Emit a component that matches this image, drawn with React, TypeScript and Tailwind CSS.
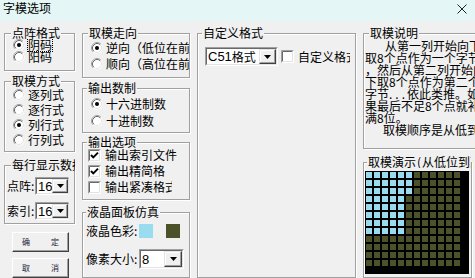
import React from "react";

type GroupProps = {
  title: React.ReactNode;
  className: string;
  legendClass: string;
  innerClass?: string;
  children?: React.ReactNode;
};

function Group({ title, className, legendClass, innerClass, children }: GroupProps) {
  return (
    <div
      className={`relative shrink-0 border border-[#a0a0a0] shadow-[inset_1px_1px_0_#fff,1px_1px_0_#fff] ${className}`}
    >
      <div
        className={`absolute top-[-7px] h-[12px] overflow-hidden whitespace-nowrap bg-[#f0f0f0] px-[1px] leading-[12px] ${legendClass}`}
      >
        {title}
      </div>
      <div className={`h-full overflow-hidden ${innerClass ?? ""}`}>{children}</div>
    </div>
  );
}

function Radio({ checked }: { checked?: boolean }) {
  return (
    <svg width="12" height="12" viewBox="0 0 12 12" className="shrink-0">
      <circle cx="6" cy="6" r="5.5" fill="#fff" />
      <path d="M2.11 9.89 A5.5 5.5 0 0 1 9.89 2.11" fill="none" stroke="#a0a0a0" strokeWidth="1" />
      <path d="M2.82 9.18 A4.5 4.5 0 0 1 9.18 2.82" fill="none" stroke="#696969" strokeWidth="1" />
      <path d="M9.18 2.82 A4.5 4.5 0 0 1 2.82 9.18" fill="none" stroke="#e3e3e3" strokeWidth="1" />
      {checked ? <circle cx="6" cy="6" r="2" fill="#000" /> : null}
    </svg>
  );
}

function Check({ checked }: { checked?: boolean }) {
  return (
    <svg width="13" height="13" viewBox="0 0 13 13" className="shrink-0">
      <rect x="0" y="0" width="13" height="13" fill="#fff" />
      <path d="M0.5 12.5 V0.5 H12.5" fill="none" stroke="#a0a0a0" />
      <path d="M1.5 11.5 V1.5 H11.5" fill="none" stroke="#696969" />
      <path d="M1.5 11.5 H11.5 V1.5" fill="none" stroke="#e3e3e3" />
      {checked ? (
        <path d="M3 6 L5.3 8.4 L10 3.6" fill="none" stroke="#000" strokeWidth="1.9" />
      ) : null}
    </svg>
  );
}

function Select({ value, className, btnClass }: { value: string; className: string; btnClass: string }) {
  return (
    <div
      className={`flex shrink-0 border border-t-[#a0a0a0] border-l-[#a0a0a0] border-b-white border-r-white ${className}`}
    >
      <div className="flex flex-1 border border-t-[#696969] border-l-[#696969] border-b-[#e3e3e3] border-r-[#e3e3e3] bg-white">
        <span className="flex flex-1 items-center pl-[1px] font-['Liberation_Sans','Noto_Sans_CJK_SC',sans-serif] text-[13px] leading-[13px]">
          {value}
        </span>
        <div
          className={`flex items-center justify-center border border-t-[#e3e3e3] border-l-[#e3e3e3] border-b-[#404040] border-r-[#404040] bg-[#f0f0f0] shadow-[inset_-1px_-1px_0_#a0a0a0,inset_1px_1px_0_#fff] ${btnClass}`}
        >
          <svg width="7" height="4" viewBox="0 0 7 4">
            <polygon points="0,0 7,0 3.5,4" fill="#000" />
          </svg>
        </div>
      </div>
    </div>
  );
}

function Button({ a, b }: { a: string; b: string }) {
  return (
    <div className="ml-[8px] flex h-[20px] w-[57px] shrink-0 items-center justify-center gap-[21px] border border-t-white border-l-white border-b-[#404040] border-r-[#404040] bg-[#f0f0f0] text-[8px] leading-[8px] text-[#1a1a3a] shadow-[inset_-1px_-1px_0_#a0a0a0]">
      <span>{a}</span>
      <span>{b}</span>
    </div>
  );
}

export default function App() {
  const rows = Array.from({ length: 12 }, (_, r) => r);
  const cols = Array.from({ length: 12 }, (_, c) => c);
  const isLit = (r: number, c: number) => (r < 3 ? c < 6 : r < 8 ? c < 5 : false);

  return (
    <div className="h-[278px] w-[475px] overflow-hidden bg-[#f0f0f0] font-['Noto_Sans_CJK_SC','Noto_Sans',sans-serif] text-[12px] leading-[12px] text-black">
      {/* title bar */}
      <div className="flex h-[21px] items-start justify-between bg-[#e5f6f6] pl-[3px] pr-[8px]">
        <span className="mt-[2px]">字模选项</span>
        <svg width="10" height="10" viewBox="0 0 10 10" className="mt-[4px]">
          <path d="M0.5 0.5 L9.5 9.5 M9.5 0.5 L0.5 9.5" stroke="#222" strokeWidth="1" />
        </svg>
      </div>

      <div className="flex items-start gap-[7px] pl-[4px]">
        {/* column 1 */}
        <div className="flex w-[71px] shrink-0 flex-col">
          <Group title="点阵格式" className="mt-[12px] h-[38px]" legendClass="left-[6px]" innerClass="pl-[8px] pt-[5px]">
            <div className="flex h-[12px] items-center">
              <Radio checked />
              <span className="ml-[3px] outline outline-1 outline-dotted outline-black">阴码</span>
            </div>
            <div className="flex h-[12px] items-center">
              <Radio />
              <span className="ml-[3px]">阳码</span>
            </div>
          </Group>

          <Group title="取模方式" className="mt-[10px] h-[71px]" legendClass="left-[6px]" innerClass="pl-[8px] pt-[5px]">
            <div className="flex h-[15px] items-center">
              <Radio />
              <span className="ml-[3px]">逐列式</span>
            </div>
            <div className="flex h-[15px] items-center">
              <Radio />
              <span className="ml-[3px]">逐行式</span>
            </div>
            <div className="flex h-[15px] items-center">
              <Radio checked />
              <span className="ml-[3px]">列行式</span>
            </div>
            <div className="flex h-[15px] items-center">
              <Radio />
              <span className="ml-[3px]">行列式</span>
            </div>
          </Group>

          <Group
            title="每行显示数据"
            className="mt-[13px] h-[59px]"
            legendClass="left-[6px] right-[-1px]"
            innerClass="pl-[2px] pt-[11px]"
          >
            <div className="flex h-[18px] items-center">
              <span className="w-[28px] shrink-0">点阵:</span>
              <Select value="16" className="h-[18px] w-[34px]" btnClass="w-[16px]" />
            </div>
            <div className="mt-[7px] flex h-[18px] items-center">
              <span className="w-[28px] shrink-0">索引:</span>
              <Select value="16" className="h-[18px] w-[34px]" btnClass="w-[16px]" />
            </div>
          </Group>

          <div className="mt-[8px]">
            <Button a="确" b="定" />
          </div>
          <div className="mt-[6px]">
            <Button a="取" b="消" />
          </div>
        </div>

        {/* column 2 */}
        <div className="flex w-[108px] shrink-0 flex-col">
          <Group title="取模走向" className="mt-[12px] h-[45px]" legendClass="left-[5px]" innerClass="pl-[8px] pt-[6px]">
            <div className="flex h-[16px] items-center whitespace-nowrap">
              <Radio checked />
              <span className="ml-[3px]">逆向（低位在前）</span>
            </div>
            <div className="flex h-[16px] items-center whitespace-nowrap">
              <Radio />
              <span className="ml-[3px]">顺向（高位在前）</span>
            </div>
          </Group>

          <Group title="输出数制" className="mt-[10px] h-[45px]" legendClass="left-[4px]" innerClass="pl-[8px] pt-[6px]">
            <div className="flex h-[17px] items-center whitespace-nowrap">
              <Radio checked />
              <span className="ml-[3px]">十六进制数</span>
            </div>
            <div className="flex h-[17px] items-center whitespace-nowrap">
              <Radio />
              <span className="ml-[3px]">十进制数</span>
            </div>
          </Group>

          <Group title="输出选项" className="mt-[9px] h-[58px]" legendClass="left-[4px]" innerClass="pl-[5px] pt-[4px]">
            <div className="flex h-[16px] items-center whitespace-nowrap">
              <Check checked />
              <span className="ml-[4px]">输出索引文件</span>
            </div>
            <div className="flex h-[16px] items-center whitespace-nowrap">
              <Check checked />
              <span className="ml-[4px]">输出精简格</span>
            </div>
            <div className="flex h-[16px] items-center whitespace-nowrap">
              <Check />
              <span className="ml-[4px] inline-block w-[67px] overflow-hidden">输出紧凑格式</span>
            </div>
          </Group>

          <Group title="液晶面板仿真" className="mt-[12px] h-[66px]" legendClass="left-[3px]" innerClass="pl-[3px] pt-[11px]">
            <div className="flex h-[14px] items-center">
              <span className="w-[53px] shrink-0 whitespace-nowrap">液晶色彩:</span>
              <div className="h-[14px] w-[14px] shrink-0 bg-[#9adcef]" />
              <div className="ml-[13px] h-[14px] w-[14px] shrink-0 bg-[#4b5229]" />
            </div>
            <div className="mt-[11px] flex h-[20px] items-center">
              <span className="w-[53px] shrink-0 whitespace-nowrap">像素大小:</span>
              <Select value="8" className="h-[20px] w-[45px]" btnClass="w-[18px]" />
            </div>
          </Group>
        </div>

        {/* column 3 */}
        <div className="flex w-[159px] shrink-0 flex-col">
          <Group title="自定义格式" className="mt-[12px] h-[245px]" legendClass="left-[4px]" innerClass="pl-[7px] pt-[13px]">
            <div className="flex h-[19px] items-center whitespace-nowrap">
              <div className="flex h-[19px] w-[73px] shrink-0 border border-t-[#a0a0a0] border-l-[#a0a0a0] border-b-white border-r-white">
                <div className="flex flex-1 border border-t-[#696969] border-l-[#696969] border-b-[#e3e3e3] border-r-[#e3e3e3] bg-white">
                  <span className="flex flex-1 items-center pl-[1px]">
                    <span className="font-['Liberation_Sans',sans-serif] text-[13px]">C51</span>
                    <span>格式</span>
                  </span>
                  <div className="flex w-[17px] items-center justify-center border border-t-[#e3e3e3] border-l-[#e3e3e3] border-b-[#404040] border-r-[#404040] bg-[#f0f0f0] shadow-[inset_-1px_-1px_0_#a0a0a0,inset_1px_1px_0_#fff]">
                    <svg width="7" height="4" viewBox="0 0 7 4">
                      <polygon points="0,0 7,0 3.5,4" fill="#000" />
                    </svg>
                  </div>
                </div>
              </div>
              <div className="ml-[3px] flex items-center">
                <Check />
              </div>
              <span className="ml-[4px] inline-block w-[52px] overflow-hidden">自定义格式</span>
            </div>
          </Group>
        </div>

        {/* column 4 */}
        <div className="flex w-[140px] shrink-0 flex-col">
          <Group title="取模说明" className="mt-[12px] h-[116px]" legendClass="left-[5px]" innerClass="pl-[1px] pt-[6px]">
            <div className="whitespace-nowrap leading-[12px]">
              <div className="pl-[20px]">从第一列开始向下</div>
              <div>取8个点作为一个字节</div>
              <div>，然后从第二列开始向下</div>
              <div>下取8个点作为第二个字节</div>
              <div>
                字节<span className="inline-block w-[18px] tracking-[3px]">...</span>依此类推。如
              </div>
              <div>果最后不足8个点就补</div>
              <div>满8位。</div>
              <div className="pl-[18px]">取模顺序是从低到高</div>
            </div>
          </Group>

          <Group
            title={
              <>
                取模演示<span className="inline-block w-[6px] text-center">(</span>从低位到高位)
              </>
            }
            className="mt-[13px] h-[116px] w-[109px]"
            legendClass="left-[3px] right-[0px]"
            innerClass="pl-[1px] pt-[8px]"
          >
            <div className="h-[103px] w-[104px] bg-black pl-[1px] pt-[1px]">
              <div className="grid grid-cols-[repeat(12,6px)] gap-[2px]">
                {rows.map((r) =>
                  cols.map((c) => (
                    <div
                      key={`${r}-${c}`}
                      className={isLit(r, c) ? "h-[6px] w-[6px] bg-[#9adcef]" : "h-[6px] w-[6px] bg-[#4b5229]"}
                    />
                  ))
                )}
              </div>
            </div>
          </Group>
        </div>
      </div>
    </div>
  );
}
